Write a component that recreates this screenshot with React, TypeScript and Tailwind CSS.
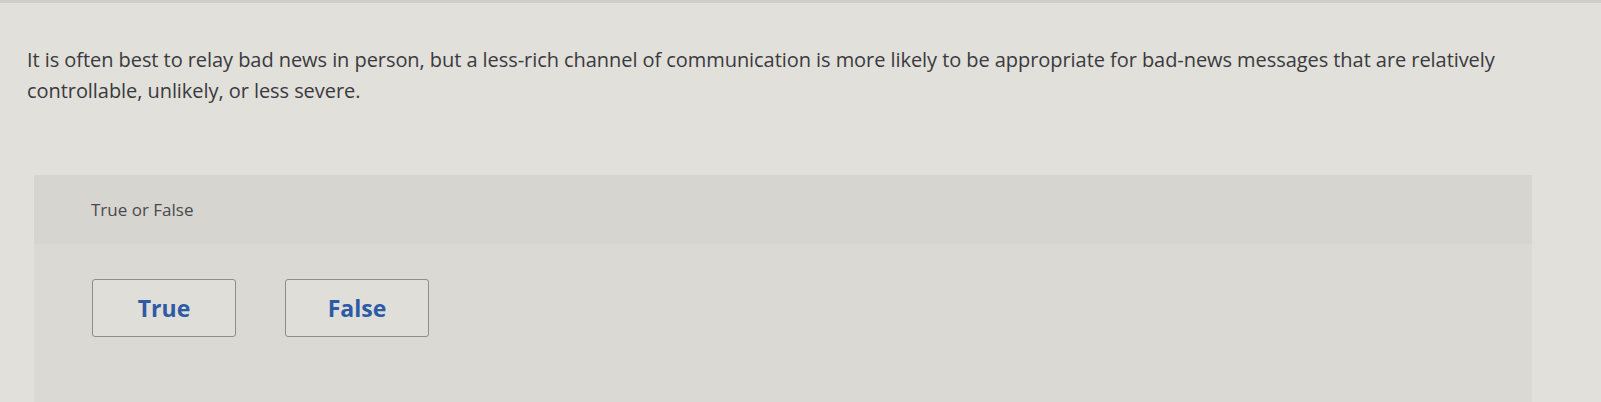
const choices = ["True", "False"];

export default function App() {
  return (
    <div
      className="h-[402px] w-full overflow-hidden bg-[#e1e0da] text-[#3d3d40]"
      style={{ fontFamily: "'Open Sans', Lato, sans-serif" }}
    >
      <div className="h-[3px] bg-[#cfcec8]" />
      <p className="w-[1520px] pl-[27px] pt-[41px] text-[20px] leading-[31px] tracking-[-0.06px] text-[#3a3a3e]">
        It is often best to relay bad news in person, but a less-rich channel of communication is more likely to be
        appropriate for bad-news messages that are relatively controllable, unlikely, or less severe.
      </p>

      <section className="ml-[34px] mt-[69px] w-[1498px]">
        <div className="flex h-[69px] items-center bg-[#d6d5d0] pl-[57px] text-[17px] text-[#4a4a4d]">
          True or False
        </div>
        <div className="flex h-[200px] gap-[49px] bg-[#dad9d4] pl-[58px] pt-[35px]">
          {choices.map((choice) => (
            <button
              key={choice}
              className="flex h-[58px] w-[144px] items-center justify-center rounded-[3px] border border-[#8d8d90] bg-[#dfded9] text-[23px] font-bold text-[#2d5aa6]"
            >
              {choice}
            </button>
          ))}
        </div>
      </section>
    </div>
  );
}
